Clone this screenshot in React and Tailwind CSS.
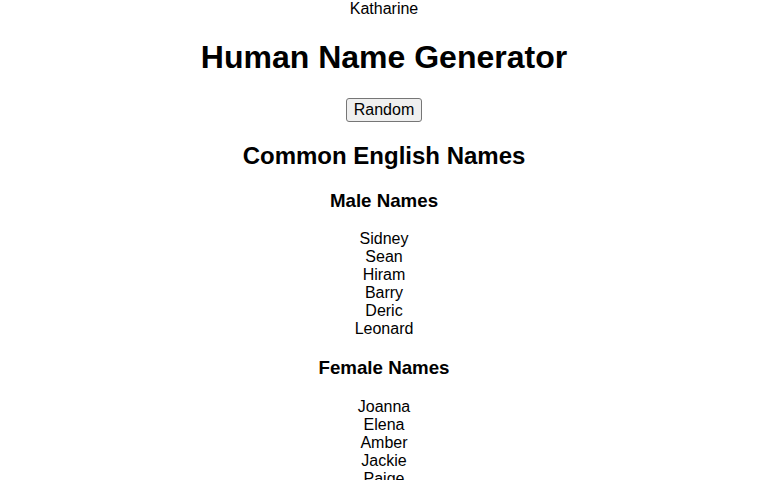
export default function App() {
  const male = ["Sidney", "Sean", "Hiram", "Barry", "Deric", "Leonard"];
  const female = ["Joanna", "Elena", "Amber", "Jackie", "Paige"];
  return (
    <div className="text-center text-black bg-white text-[16px] leading-[normal] font-['Liberation_Sans',Arial,sans-serif]">
      <div>Katharine</div>
      <h1 className="text-[32px] font-bold my-[21.44px]">Human Name Generator</h1>
      <button className="text-[16px] leading-[normal] px-[7px] py-[2px] bg-[#efefef] border border-[#767676] rounded-[3px] text-black">
        Random
      </button>
      <h2 className="text-[24px] font-bold my-[19.92px]">Common English Names</h2>
      <h3 className="text-[18.72px] font-bold my-[18.72px]">Male Names</h3>
      <div>
        {male.map((n) => (
          <div key={n}>{n}</div>
        ))}
      </div>
      <h3 className="text-[18.72px] font-bold my-[18.72px]">Female Names</h3>
      <div>
        {female.map((n) => (
          <div key={n}>{n}</div>
        ))}
      </div>
    </div>
  );
}
